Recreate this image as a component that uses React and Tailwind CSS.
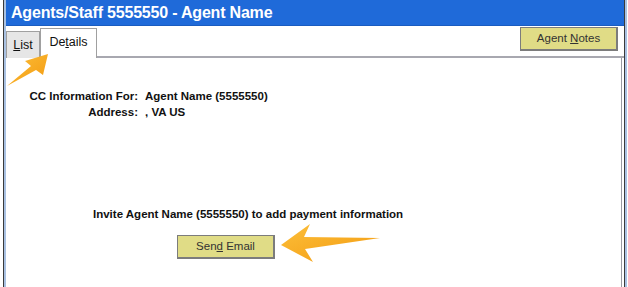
import React from "react"

const font = { fontFamily: '"Liberation Sans", Arial, sans-serif' }

function YellowButton({ children, className = "" }) {
  return (
    <button
      className={`h-[24px] w-[98px] bg-[#e0dc86] border border-[#7c7c7c] border-r-2 border-b-2 text-[11.5px] text-[#333] leading-none ${className}`}
    >
      {children}
    </button>
  )
}

function Arrows() {
  return (
    <svg className="absolute inset-0 pointer-events-none" width="628" height="287" viewBox="0 0 628 287">
      <defs>
        <linearGradient id="org" x1="0" y1="0" x2="1" y2="1">
          <stop offset="0" stopColor="#fcbf3a" />
          <stop offset="1" stopColor="#f39a10" />
        </linearGradient>
      </defs>
      {/* arrow pointing at the Details tab */}
      <polygon points="48,54 25,61 31,66 7,86 36,70 43,75" fill="url(#org)" />
      {/* arrow pointing at Send Email */}
      <polygon points="281,245 310,224 304,237 380,238 305,249 313,262" fill="url(#org)" />
    </svg>
  )
}

export default function App() {
  return (
    <div className="relative w-[628px] h-[287px] bg-white overflow-hidden" style={font}>
      <div className="ml-[3px] w-[624px] h-full flex border-l border-[#3a3a3a]">
        <div className="flex-1 flex flex-col border-l-2 border-[#a9c1e2] border-r border-r-[#3a3a3a]">
          {/* title bar */}
          <div className="h-[26px] bg-[#1f6ad9] border-b border-[#1a5cc0] flex items-center pl-[5px]">
            <h1 className="text-white font-bold text-[16px] tracking-[-0.2px] leading-none">Agents/Staff 5555550 - Agent Name</h1>
          </div>

          {/* tabs row */}
          <div className="h-[32px] flex items-end">
            <div className="h-[27px] w-[34px] bg-[#e6e6e6] border border-[#a0a0a0] border-b-0 flex items-center justify-center text-[12.5px] text-[#111]">
              <span><span className="underline">L</span>ist</span>
            </div>
            <div className="h-[30px] w-[57px] bg-white border border-[#a0a0a0] border-b-0 flex items-center justify-center text-[12.5px] text-[#111] pb-[2px]">
              <span>De<span className="underline">t</span>ails</span>
            </div>
            <div className="flex-1 h-full flex justify-end items-start border-b-2 border-[#a8a8b0]">
              <YellowButton className="mt-px mr-[6px]">
                Agent <span className="underline">N</span>otes
              </YellowButton>
            </div>
          </div>

          {/* details panel */}
          <div className="flex-1 mr-[2px] border-r border-[#9a9aa2] pt-[30px] text-[11.5px] font-bold text-[#111]">
            <div className="grid grid-cols-[132px_auto] gap-x-[7px] leading-[16px]">
              <div className="text-right">CC Information For:</div>
              <div>Agent Name (5555550)</div>
              <div className="text-right">Address:</div>
              <div>, VA US</div>
            </div>
            <p className="mt-[86px] ml-[87px] leading-[16px]">
              Invite Agent Name (5555550) to add payment information
            </p>
            <YellowButton className="mt-[13px] ml-[171px] font-normal">
              Sen<span className="underline">d</span> Email
            </YellowButton>
          </div>
        </div>
        <div className="w-[2px] bg-[#a9c1e2]" />
      </div>
      <Arrows />
    </div>
  )
}
